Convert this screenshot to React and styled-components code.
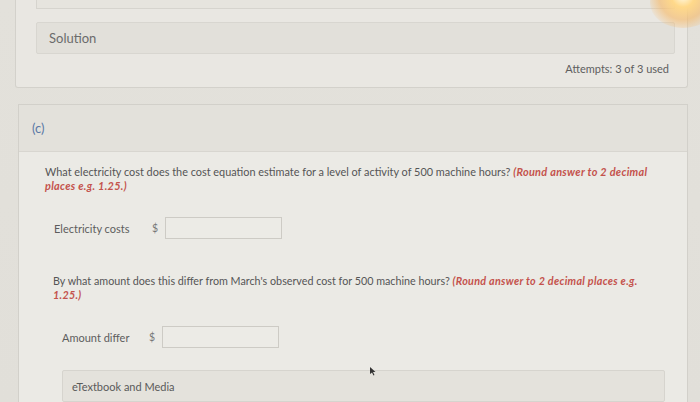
import React from "react";
import styled, { createGlobalStyle } from "styled-components";

const Global = createGlobalStyle`
  html, body {
    margin: 0;
    padding: 0;
    background: #dedcd6;
    font-family: Lato, "Open Sans", sans-serif;
  }
`;

const Page = styled.div`
  position: relative;
  width: 700px;
  height: 402px;
  overflow: hidden;
  background: linear-gradient(180deg, #e3e1db 0%, #e1dfd9 100%);
`;

const Glare = styled.div`
  position: absolute;
  right: -16px;
  top: -22px;
  width: 66px;
  height: 50px;
  border-radius: 50%;
  background: radial-gradient(circle at 50% 35%, #fffbe9 0%, #ffd98a 25%, rgba(247, 184, 100, 0.6) 52%, rgba(240, 200, 150, 0) 80%);
`;

const SolutionPanel = styled.section`
  margin: 0 12px 0 15px;
  padding: 0 12px 12px 20px;
  background: #e9e7e2;
  border: 1px solid #d3d1cb;
  border-top: none;
  border-radius: 0 0 3px 3px;
`;

const TopBox = styled.div`
  height: 8px;
  background: #e6e4de;
  border: 1px solid #d6d4ce;
  border-top: none;
  margin-bottom: 13px;
`;

const SolutionBox = styled.div`
  height: 30px;
  display: flex;
  align-items: center;
  padding-left: 12px;
  background: #e2e0da;
  border: 1px solid #d8d6d0;
  border-radius: 2px;
  font-size: 13px;
  color: #6b6b6b;
`;

const Attempts = styled.div`
  text-align: right;
  padding: 8px 6px 0 0;
  font-size: 11px;
  color: #5e5e5e;
`;

const PartPanel = styled.section`
  margin: 16px 12px 0 18px;
  border: 1px solid #d2d0ca;
  border-bottom: none;
  background: #ebeae5;
`;

const PartHeader = styled.div`
  height: 46px;
  display: flex;
  align-items: center;
  padding-left: 13px;
  background: #e3e1db;
  border-bottom: 1px solid #d8d6d0;
  font-size: 13px;
  color: #5a78a6;
`;

const PartBody = styled.div`
  padding: 13px 22px 0 26px;
`;

const Question = styled.p`
  margin: ${(p) => p.$top || 0}px 0 0;
  padding-left: ${(p) => p.$shift || 0}px;
  font-size: ${(p) => p.$size}px;
  line-height: 14px;
  color: #555;
`;

const Hint = styled.span`
  color: #c4524c;
  font-weight: 700;
  font-style: italic;
  letter-spacing: 0.3px;
`;

const AnswerRow = styled.div`
  display: flex;
  align-items: center;
  padding-left: ${(p) => p.$shift}px;
  margin-top: ${(p) => p.$top}px;
`;

const Label = styled.span`
  width: ${(p) => p.$w}px;
  font-size: 11px;
  color: #5d5d5d;
`;

const Dollar = styled.span`
  width: 13px;
  font-size: 10.5px;
  color: #777;
`;

const AnswerInput = styled.input`
  width: 117px;
  height: 22px;
  box-sizing: border-box;
  border: 1px solid #cdcbc5;
  background: #ecebe6;
  padding: 0 4px;
  font: inherit;
  outline: none;
`;

const Media = styled.div`
  margin: 22px 0 0 ${(p) => p.$shift}px;
  height: 30px;
  display: flex;
  align-items: center;
  padding-left: 9px;
  background: #e4e2dc;
  border: 1px solid #d6d4ce;
  border-radius: 2px;
  font-size: 11px;
  color: #5a5a5a;
`;

const Cursor = styled.svg`
  position: absolute;
  left: 369px;
  top: 366px;
`;

export default function App() {
  return (
    <Page>
      <Global />
      <SolutionPanel>
        <TopBox />
        <SolutionBox>Solution</SolutionBox>
        <Attempts>Attempts: 3 of 3 used</Attempts>
      </SolutionPanel>
      <PartPanel>
        <PartHeader>(c)</PartHeader>
        <PartBody>
          <Question $size={10.9}>
            What electricity cost does the cost equation estimate for a level of activity of 500 machine hours?{" "}
            <Hint>(Round answer to 2 decimal places e.g. 1.25.)</Hint>
          </Question>
          <AnswerRow $shift={9} $top={24}>
            <Label $w={98}>Electricity costs</Label>
            <Dollar>$</Dollar>
            <AnswerInput />
          </AnswerRow>
          <Question $size={10.75} $shift={8} $top={35}>
            By what amount does this differ from March's observed cost for 500 machine hours?{" "}
            <Hint>(Round answer to 2 decimal places e.g. 1.25.)</Hint>
          </Question>
          <AnswerRow $shift={17} $top={24}>
            <Label $w={87}>Amount differ</Label>
            <Dollar>$</Dollar>
            <AnswerInput />
          </AnswerRow>
          <Media $shift={17}>eTextbook and Media</Media>
        </PartBody>
      </PartPanel>
      <Cursor width="8" height="10" viewBox="0 0 8 10">
        <path d="M1 1 L1 8 L3 6.5 L4.5 9.5 L5.5 9 L4 6 L6.5 6 Z" fill="#333" />
      </Cursor>
      <Glare />
    </Page>
  );
}
